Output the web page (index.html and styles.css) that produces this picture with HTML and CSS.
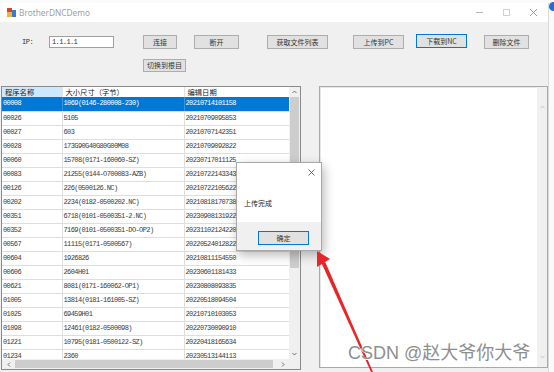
FILE: index.html
```html
<!DOCTYPE html>
<html lang="zh-CN">
<head>
  <meta charset="UTF-8">
  <title>BrotherDNCDemo</title>
  <link rel="stylesheet" href="styles.css">
</head>
<body>
  <div class="screen">
    <div class="window">
      <div class="titlebar">
        <svg class="app-icon" viewBox="0 0 9 9">
          <rect x="0" y="0" width="5" height="4" fill="#d8432c"/>
          <rect x="0" y="4" width="5" height="5" fill="#f1b43c"/>
          <rect x="5" y="2" width="4" height="7" fill="#3b79d2"/>
        </svg>
        <span class="app-title">BrotherDNCDemo</span>
        <div class="win-controls">
          <span class="win-btn">
            <svg width="9" height="9" viewBox="0 0 9 9"><line x1="1" y1="4.5" x2="8" y2="4.5" stroke="#b5b5b5"/></svg>
          </span>
          <span class="win-btn">
            <svg width="9" height="9" viewBox="0 0 9 9"><rect x="1.5" y="1.5" width="6" height="6" fill="none" stroke="#d0d0d0"/></svg>
          </span>
          <span class="win-btn">
            <svg width="9" height="9" viewBox="0 0 9 9"><path d="M1 1 L8 8 M8 1 L1 8" stroke="#9c9c9c"/></svg>
          </span>
        </div>
      </div>

      <div class="client">
        <div class="toolbar">
          <div class="tool-row">
            <span class="ip-label">IP:</span>
            <input class="ip-input" type="text" value="1.1.1.1">
            <button class="btn b-connect">连接</button>
            <button class="btn b-close">断开</button>
            <button class="btn b-list">获取文件列表</button>
            <button class="btn b-up">上传到PC</button>
            <button class="btn b-down is-default">下载到NC</button>
            <button class="btn b-del">删除文件</button>
          </div>
          <div class="tool-row row-2">
            <button class="btn b-root">切换到根目</button>
          </div>
        </div>

        <div class="main">
          <div class="grid-frame">
            <div class="grid-body">
              <table class="grid">
                <colgroup>
                  <col class="c-name">
                  <col class="c-size">
                  <col class="c-date">
                </colgroup>
                <thead>
                  <tr>
                    <th class="th-active">程序名称</th>
                    <th>大小尺寸（字节）</th>
                    <th>编辑日期</th>
                  </tr>
                </thead>
                <tbody>
                  <tr class="selected"><td>00008</td><td>1069(0146-280008-230)</td><td>20210714101158</td></tr>
                  <tr><td>00026</td><td>5105</td><td>20210709095853</td></tr>
                  <tr><td>00027</td><td>603</td><td>20210707142351</td></tr>
                  <tr><td>00028</td><td>173G90G40G80G00M08</td><td>20210709092822</td></tr>
                  <tr><td>00060</td><td>15708(0171-160060-SZ)</td><td>20230717011125</td></tr>
                  <tr><td>00083</td><td>21255(0144-O700083-AZB)</td><td>20210722143343</td></tr>
                  <tr><td>00126</td><td>226(0500126.NC)</td><td>20210722105622</td></tr>
                  <tr><td>00202</td><td>2234(0182-0500202.NC)</td><td>20210818170738</td></tr>
                  <tr><td>00351</td><td>6718(0101-0500351-2.NC)</td><td>20230908131922</td></tr>
                  <tr><td>00352</td><td>7169(0101-0500351-DO-OP2)</td><td>20231102124220</td></tr>
                  <tr><td>00567</td><td>11115(0171-0500567)</td><td>20220524012822</td></tr>
                  <tr><td>00604</td><td>1926826</td><td>20210811154550</td></tr>
                  <tr><td>00606</td><td>2604H01</td><td>20230601181433</td></tr>
                  <tr><td>00621</td><td>8081(0171-160062-OP1)</td><td>20230808093835</td></tr>
                  <tr><td>01005</td><td>13814(0181-161005-SZ)</td><td>20220518094504</td></tr>
                  <tr><td>01025</td><td>69459H01</td><td>20210710103053</td></tr>
                  <tr><td>01098</td><td>12461(0182-0500098)</td><td>20220730090910</td></tr>
                  <tr><td>01221</td><td>10795(0181-0500122-SZ)</td><td>20220418165634</td></tr>
                  <tr><td>01234</td><td>2360</td><td>20230513144113</td></tr>
                </tbody>
              </table>
            </div>
            <div class="vscroll">
              <span class="arrow"><svg width="5" height="4" viewBox="0 0 5 4"><path d="M0.5 3 L2.5 1 L4.5 3" fill="none" stroke="#707070"/></svg></span>
              <span class="v-thumb"></span>
              <span class="arrow arrow-end"><svg width="5" height="4" viewBox="0 0 5 4"><path d="M0.5 1 L2.5 3 L4.5 1" fill="none" stroke="#707070"/></svg></span>
            </div>
            <div class="hscroll">
              <span class="arrow"><svg width="4" height="5" viewBox="0 0 4 5"><path d="M3 0.5 L1 2.5 L3 4.5" fill="none" stroke="#707070"/></svg></span>
              <span class="h-thumb"></span>
              <span class="arrow"><svg width="4" height="5" viewBox="0 0 4 5"><path d="M1 0.5 L3 2.5 L1 4.5" fill="none" stroke="#707070"/></svg></span>
            </div>
            <div class="corner"></div>
          </div>

          <div class="memo">
            <div class="memo-scroll">
              <span class="arrow"><svg width="5" height="4" viewBox="0 0 5 4"><path d="M0.5 3 L2.5 1 L4.5 3" fill="none" stroke="#c4c4c4"/></svg></span>
              <span class="arrow"><svg width="5" height="4" viewBox="0 0 5 4"><path d="M0.5 1 L2.5 3 L4.5 1" fill="none" stroke="#c4c4c4"/></svg></span>
            </div>
          </div>
        </div>
      </div>
    </div>

    <!-- 消息框 -->
    <div class="dialog">
      <div class="dlg-top">
        <svg width="7" height="7" viewBox="0 0 7 7"><path d="M0.5 0.5 L6.5 6.5 M6.5 0.5 L0.5 6.5" stroke="#444" stroke-width="0.8"/></svg>
      </div>
      <div class="dlg-msg">上传完成</div>
      <div class="dlg-foot">
        <button class="btn dlg-ok">确定</button>
      </div>
    </div>

    <svg class="annot" width="554" height="372" viewBox="0 0 554 372">
      <polygon points="320.5,261 325.5,262.5 373,372 371,372" fill="#e5262a"/>
      <polygon points="317,251 330,259 317,267" fill="#e5262a"/>
    </svg>

    <span class="blue-dot"></span>
    <div class="watermark">CSDN @赵大爷你大爷</div>
  </div>
</body>
</html>
```

FILE: styles.css
```css
* {
  box-sizing: border-box;
}

body {
  margin: 0;
  background: #fafafa;
  font-family: "Noto Sans CJK SC", sans-serif;
}

.screen {
  position: relative;
  width: 554px;
  height: 372px;
  overflow: hidden;
}

.window {
  margin-top: 3px;
  width: 549px;
  height: 369px;
  border-right: 1px solid #d9d9d9;
  background: #f0f0f0;
  display: flex;
  flex-direction: column;
}

/* titlebar */
.titlebar {
  height: 19px;
  flex-shrink: 0;
  background: #fff;
  display: flex;
  align-items: center;
  padding-left: 7px;
}

.app-icon {
  width: 9px;
  height: 9px;
}

.app-title {
  margin-left: 3px;
  font-family: "Noto Sans", sans-serif;
  font-size: 8.3px;
  color: #a0a0a0;
}

.win-controls {
  margin-left: auto;
  margin-right: 1px;
  display: flex;
}

.win-btn {
  width: 27px;
  height: 19px;
  display: flex;
  align-items: center;
  justify-content: center;
}

/* toolbar */
.client {
  flex: 1;
}

.toolbar {
  padding-top: 13px;
}

.tool-row {
  display: flex;
  align-items: center;
  height: 14px;
}

.row-2 {
  margin-top: 10px;
  height: 13px;
}

.ip-label {
  margin-left: 22px;
  width: 27px;
  font-family: "Liberation Mono", monospace;
  font-size: 7px;
  letter-spacing: -0.5px;
  color: #333;
}

.ip-input {
  width: 65px;
  height: 12px;
  padding: 0 2px;
  border: 1px solid #a0a0a0;
  background: #fff;
  font-family: "Liberation Mono", monospace;
  font-size: 7px;
  letter-spacing: -0.6px;
  color: #333;
  outline: none;
}

.btn {
  height: 14px;
  padding: 0;
  background: #e1e1e1;
  border: 1px solid #adadad;
  font-family: "Noto Sans CJK SC", sans-serif;
  font-size: 7px;
  line-height: 1;
  color: #333;
  display: flex;
  align-items: center;
  justify-content: center;
}

.is-default {
  border-color: #0078d7;
  margin-top: -2px;
}

.b-connect { margin-left: 29px; width: 34px; }
.b-close   { margin-left: 17px; width: 45px; }
.b-list    { margin-left: 28px; width: 61px; }
.b-up      { margin-left: 25px; width: 51px; }
.b-down    { margin-left: 12px; width: 51px; }
.b-del     { margin-left: 17px; width: 45px; }
.b-root    { margin-left: 143px; width: 43px; height: 13px; }

/* main area */
.main {
  margin-top: 14px;
  padding-left: 1px;
  display: flex;
  align-items: flex-start;
}

.grid-frame {
  width: 300px;
  height: 284px;
  border: 1px solid #8a8a8a;
  background: #fff;
  display: grid;
  grid-template-columns: 287px 11px;
  grid-template-rows: 272px 10px;
}

.grid-body {
  overflow: hidden;
}

.grid {
  width: 287px;
  table-layout: fixed;
  border-collapse: collapse;
}

.c-name { width: 60px; }
.c-size { width: 122px; }
.c-date { width: 105px; }

.grid th {
  height: 10px;
  padding: 0 3px;
  text-align: left;
  font-weight: normal;
  font-size: 7.3px;
  line-height: 10px;
  color: #222;
  border-right: 1px solid #e3e3e3;
  white-space: nowrap;
  overflow: hidden;
}

.grid th.th-active {
  background: #cce8ff;
}

.grid td {
  height: 14px;
  padding: 0 1px;
  font-family: "Liberation Mono", monospace;
  font-size: 7px;
  letter-spacing: -0.6px;
  line-height: 13px;
  color: #3a3a3a;
  border-right: 1px solid #dedede;
  border-bottom: 1px solid #dedede;
  white-space: nowrap;
  overflow: hidden;
}

.grid tr.selected td {
  background: #0078d7;
  color: #fff;
  border-right-color: #3d93dc;
}

.vscroll {
  background: #f0f0f0;
  display: flex;
  flex-direction: column;
  align-items: center;
}

.vscroll .arrow {
  height: 10px;
  display: flex;
  align-items: center;
}

.vscroll .arrow-end {
  margin-top: auto;
}

.v-thumb {
  width: 9px;
  height: 171px;
  background: #cdcdcd;
}

.hscroll {
  background: #f0f0f0;
  display: flex;
  align-items: center;
  padding: 0 2px;
}

.hscroll .arrow {
  width: 9px;
  display: flex;
  justify-content: center;
}

.h-thumb {
  margin-left: 2px;
  width: 258px;
  height: 8px;
  background: #cdcdcd;
}

.hscroll .arrow:last-child {
  margin-left: auto;
}

.corner {
  background: #f0f0f0;
}

.memo {
  margin-left: 18px;
  width: 230px;
  height: 282px;
  border: 1px solid #a9a9a9;
  box-shadow: inset 1px 1px 0 #e6e6e6;
  background: #fff;
  display: flex;
  justify-content: flex-end;
}

.memo-scroll {
  width: 10px;
  background: #f0f0f0;
  display: flex;
  flex-direction: column;
  justify-content: space-between;
  align-items: center;
  padding: 3px 0;
}

/* message box */
.dialog {
  position: absolute;
  left: 236px;
  top: 162px;
  width: 86px;
  height: 89px;
  background: #fff;
  border: 1px solid #a8a8a8;
  box-shadow: 2px 4px 10px rgba(0, 0, 0, 0.28);
  display: flex;
  flex-direction: column;
}

.dlg-top {
  height: 20px;
  display: flex;
  justify-content: flex-end;
  padding: 6px 6px 0 0;
}

.dlg-msg {
  margin-top: 16px;
  padding-left: 7px;
  font-size: 7px;
  line-height: 9px;
  color: #222;
}

.dlg-foot {
  margin-top: auto;
  height: 28px;
  background: #f0f0f0;
  display: flex;
  justify-content: flex-end;
  padding: 9px 12px 0 0;
}

.dlg-ok {
  width: 51px;
  border-color: #0078d7;
}

/* annotations on top of the screenshot */
.annot {
  position: absolute;
  left: 0;
  top: 0;
  pointer-events: none;
}

.blue-dot {
  position: absolute;
  left: 549px;
  top: 2px;
  width: 9px;
  height: 9px;
  border-radius: 50%;
  background: #1a6fd8;
}

.watermark {
  position: absolute;
  left: 348px;
  top: 342px;
  font-family: "Liberation Sans", "Noto Sans CJK SC", sans-serif;
  font-size: 18px;
  line-height: 22px;
  color: #8e8e8e;
  text-shadow: 1px 1px 0 #fff, -1px 0 0 rgba(255, 255, 255, 0.7);
  white-space: nowrap;
}
```
